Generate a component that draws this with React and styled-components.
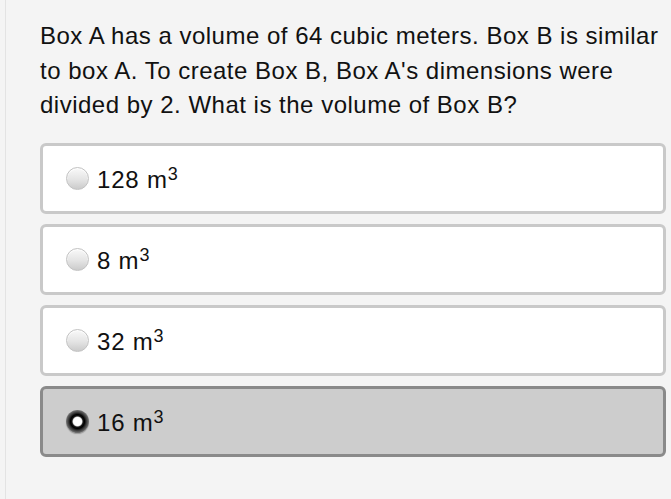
import React, { useState } from "react";
import styled, { createGlobalStyle } from "styled-components";

const GlobalStyle = createGlobalStyle`
  html, body {
    margin: 0;
    padding: 0;
    background: #f4f4f4;
  }
  body {
    font-family: "Liberation Sans", Arial, Helvetica, sans-serif;
    color: #111;
  }
`;

const Page = styled.div`
  margin-left: 5px;
  min-height: 499px;
  box-sizing: border-box;
  border-left: 1px solid #e3e3e3;
  padding: 19px 5px 20px 34px;
`;

const Question = styled.p`
  margin: 0 0 20px 0;
  font-size: 24px;
  line-height: 34.5px;
  letter-spacing: 0.5px;
`;

const Choices = styled.div`
  display: flex;
  flex-direction: column;
  gap: 10px;
`;

const Choice = styled.label`
  display: flex;
  align-items: center;
  gap: 8px;
  height: 71px;
  box-sizing: border-box;
  padding: 4px 0 0 23px;
  border: 3px solid ${(p) => (p.$selected ? "#8a8a8a" : "#c9c9c9")};
  border-radius: 6px;
  background: ${(p) => (p.$selected ? "#cdcdcd" : "#ffffff")};
  cursor: pointer;
`;

const Radio = styled.span`
  width: 23px;
  height: 23px;
  margin-top: -4px;
  border-radius: 50%;
  box-sizing: border-box;
  flex-shrink: 0;
  ${(p) =>
    p.$checked
      ? `
    background: radial-gradient(circle at 50% 50%, #ffffff 0 4px, #d8d8d8 4.5px, #1a1a1a 5.5px, #000 7px, #3a3a3a 9px, #777 11.5px);
    box-shadow: 0 1px 1px rgba(0,0,0,0.25);
  `
      : `
    background: linear-gradient(180deg, #f9f9f9 0%, #e4e4e4 55%, #cbcbcb 100%);
    border: 1px solid #c2c2c2;
    box-shadow: inset 0 1px 1px #fff;
  `}
`;

const Answer = styled.span`
  font-size: 24px;
  line-height: 26px;
  letter-spacing: 0.8px;
`;

const Sup = styled.span`
  font-size: 18px;
  line-height: 0;
  position: relative;
  top: -8px;
`;

const options = [
  { id: "a", value: "128" },
  { id: "b", value: "8" },
  { id: "c", value: "32" },
  { id: "d", value: "16" },
];

export default function App() {
  const [selected, setSelected] = useState("d");

  return (
    <>
      <GlobalStyle />
      <Page>
        <Question>
          Box A has a volume of 64 cubic meters. Box B is similar to box A. To
          create Box B, Box A's dimensions were divided by 2. What is the volume
          of Box B?
        </Question>
        <Choices>
          {options.map((o) => (
            <Choice
              key={o.id}
              $selected={selected === o.id}
              onClick={() => setSelected(o.id)}
            >
              <Radio $checked={selected === o.id} />
              <Answer>
                {o.value} m<Sup>3</Sup>
              </Answer>
            </Choice>
          ))}
        </Choices>
      </Page>
    </>
  );
}
